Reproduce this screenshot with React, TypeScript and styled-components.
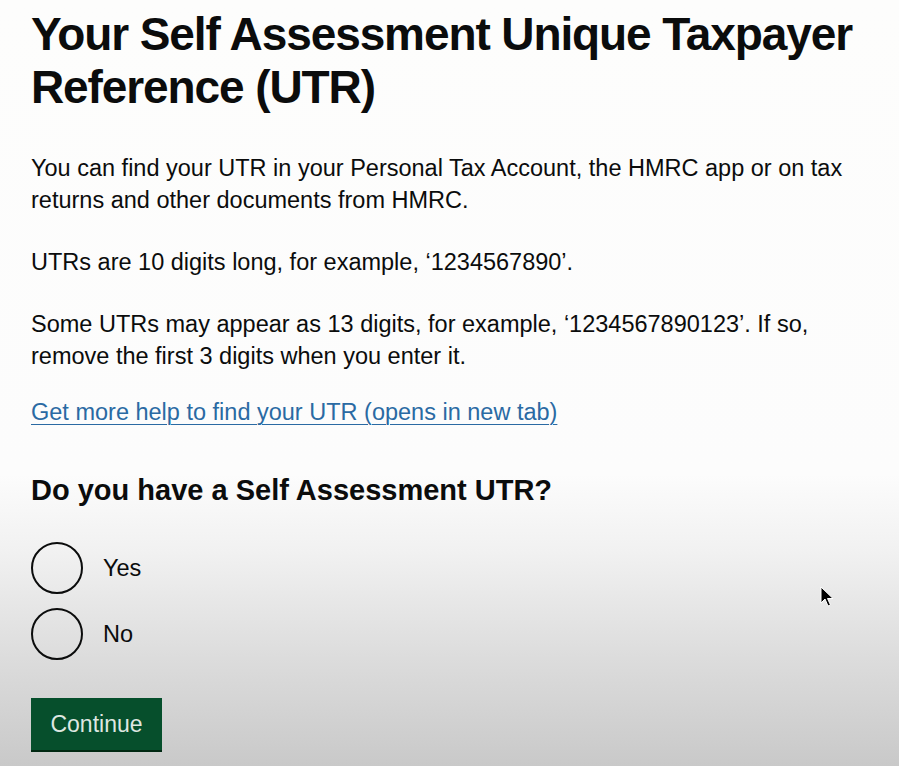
import React from "react";
import styled, { createGlobalStyle } from "styled-components";

const GlobalStyle = createGlobalStyle`
  html, body {
    margin: 0;
    padding: 0;
  }
  body {
    font-family: "Liberation Sans", Arial, sans-serif;
    color: #0b0c0c;
    background: #fdfdfc;
  }
`;

const Page = styled.main`
  position: relative;
  width: 899px;
  height: 766px;
  overflow: hidden;
  box-sizing: border-box;
  padding: 8px 0 0 31px;
  background: linear-gradient(
    to bottom,
    #fdfdfc 0%,
    #fcfcfc 62%,
    #f1f1f1 72%,
    #dcdcdc 86%,
    #c9c9c9 100%
  );
`;

const Title = styled.h1`
  margin: 0;
  font-size: 46px;
  line-height: 53px;
  font-weight: 700;
  letter-spacing: -1.1px;
  width: 860px;
`;

const Body = styled.p`
  margin: 0;
  font-size: 23.5px;
  line-height: 32px;
  font-weight: 400;
  width: 840px;
`;

const Content = styled.div`
  display: flex;
  flex-direction: column;
  gap: 30px;
  margin-top: 38px;
`;

const LinkRow = styled.div`
  margin-top: -6px;
`;

const HelpLink = styled.a`
  font-size: 23.5px;
  line-height: 32px;
  color: #2a6aa3;
  text-decoration: underline;
  text-decoration-thickness: 1px;
  text-underline-offset: 4px;
`;

const Fieldset = styled.fieldset`
  border: 0;
  margin: 45px 0 0;
  padding: 0;
`;

const Legend = styled.legend`
  padding: 0;
  font-size: 29px;
  line-height: 34px;
  font-weight: 700;
`;

const Options = styled.div`
  display: flex;
  flex-direction: column;
  gap: 14px;
  margin-top: 35px;
`;

const Option = styled.label`
  display: flex;
  align-items: center;
  gap: 20px;
  font-size: 23.5px;
  line-height: 32px;
  cursor: pointer;
`;

const Circle = styled.span`
  display: block;
  width: 48px;
  height: 48px;
  border: 2px solid #0b0c0c;
  border-radius: 50%;
  box-sizing: content-box;
  background: transparent;
`;

const Button = styled.button`
  margin-top: 38px;
  width: 131px;
  height: 52px;
  border: 0;
  padding: 0;
  background: #064f2c;
  box-shadow: 0 2px 0 #002812;
  color: #dfe7e1;
  font-family: inherit;
  font-size: 23px;
  line-height: 32px;
  text-align: center;
  cursor: pointer;
`;

const Cursor = styled.svg`
  position: absolute;
  left: 820px;
  top: 586px;
  width: 14px;
  height: 22px;
`;

export default function App() {
  return (
    <>
      <GlobalStyle />
      <Page>
        <Title>Your Self Assessment Unique Taxpayer Reference (UTR)</Title>
        <Content>
          <Body>
            You can find your UTR in your Personal Tax Account, the HMRC app or
            on tax returns and other documents from HMRC.
          </Body>
          <Body>UTRs are 10 digits long, for example, ‘1234567890’.</Body>
          <Body>
            Some UTRs may appear as 13 digits, for example, ‘1234567890123’. If
            so, remove the first 3 digits when you enter it.
          </Body>
          <LinkRow>
            <HelpLink href="#">Get more help to find your UTR (opens in new tab)</HelpLink>
          </LinkRow>
        </Content>
        <Fieldset>
          <Legend>Do you have a Self Assessment UTR?</Legend>
          <Options>
            <Option>
              <Circle />
              Yes
            </Option>
            <Option>
              <Circle />
              No
            </Option>
          </Options>
        </Fieldset>
        <Button type="button">Continue</Button>
        <Cursor viewBox="0 0 14 22">
          <path
            d="M1 1 L1 17 L5 13 L8 20 L10.5 19 L7.5 12.5 L13 12.5 Z"
            fill="#000"
            stroke="#fff"
            strokeWidth="1"
          />
        </Cursor>
      </Page>
    </>
  );
}
